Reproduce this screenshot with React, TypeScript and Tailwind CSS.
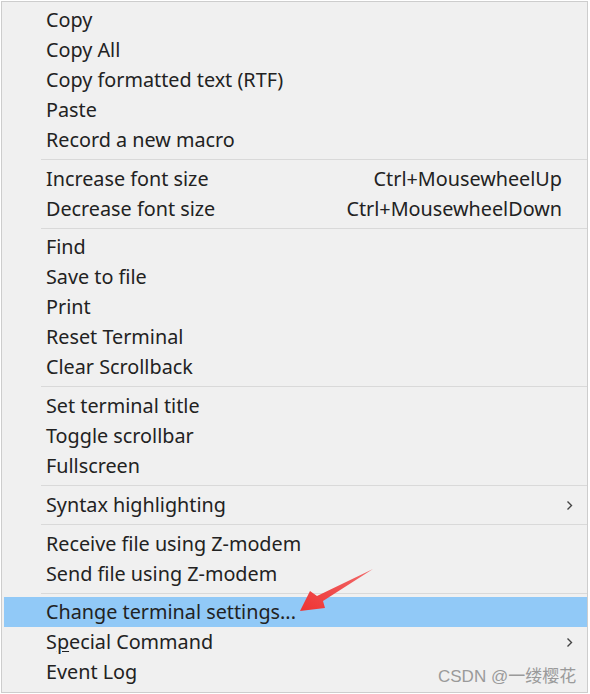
import React from "react";

type Item = {
  label: React.ReactNode;
  shortcut?: string;
  sub?: boolean;
  active?: boolean;
};

const groups: { items: Item[]; gap: string }[] = [
  {
    gap: "h-[9px]",
    items: [
      { label: "Copy" },
      { label: "Copy All" },
      { label: "Copy formatted text (RTF)" },
      { label: "Paste" },
      { label: "Record a new macro" },
    ],
  },
  {
    gap: "h-[8px]",
    items: [
      { label: "Increase font size", shortcut: "Ctrl+MousewheelUp" },
      { label: "Decrease font size", shortcut: "Ctrl+MousewheelDown" },
    ],
  },
  {
    gap: "h-[9px]",
    items: [
      { label: "Find" },
      { label: "Save to file" },
      { label: "Print" },
      { label: "Reset Terminal" },
      { label: "Clear Scrollback" },
    ],
  },
  {
    gap: "h-[9px]",
    items: [
      { label: "Set terminal title" },
      { label: "Toggle scrollbar" },
      { label: "Fullscreen" },
    ],
  },
  {
    gap: "h-[9px]",
    items: [{ label: "Syntax highlighting", sub: true }],
  },
  {
    gap: "h-[8px]",
    items: [
      { label: "Receive file using Z-modem" },
      { label: "Send file using Z-modem" },
    ],
  },
  {
    gap: "",
    items: [
      { label: "Change terminal settings...", active: true },
      {
        label: (
          <>
            S<span className="underline underline-offset-2">p</span>ecial Command
          </>
        ),
        sub: true,
      },
      { label: "Event Log" },
    ],
  },
];

function Chevron() {
  return (
    <svg width="7" height="11" viewBox="0 0 7 11" className="absolute right-[14px]">
      <path d="M1.5 1.5 L5.5 5.5 L1.5 9.5" fill="none" stroke="#444" strokeWidth="1.4" />
    </svg>
  );
}

function Row({ item }: { item: Item }) {
  return (
    <div
      className={
        "relative flex h-[30px] items-center pr-[25px] " +
        (item.active ? "ml-[2px] bg-[#91c9f7] pl-[42px]" : "pl-[44px]")
      }
    >
      <span className="flex-1 whitespace-nowrap">{item.label}</span>
      {item.shortcut && <span className="whitespace-nowrap">{item.shortcut}</span>}
      {item.sub && <Chevron />}
    </div>
  );
}

export default function App() {
  return (
    <div className="relative h-[694px] w-[590px] overflow-hidden bg-white pl-px pt-px">
      <div
        className="h-[692px] w-[587px] border border-[#cdcdcd] bg-[#f0f0f0] pt-[3px] text-[19.8px] leading-[30px] text-[#222]"
        style={{ fontFamily: '"Noto Sans", "Open Sans", sans-serif' }}
      >
        {groups.map((g, i) => (
          <div key={i}>
            {g.items.map((it, j) => (
              <Row key={j} item={it} />
            ))}
            {g.gap && (
              <div className={"flex items-center " + g.gap}>
                <div className="ml-[39px] h-px flex-1 bg-[#d9d9d9]" />
              </div>
            )}
          </div>
        ))}
      </div>

      <svg className="absolute left-[296px] top-[566px]" width="82" height="50" viewBox="296 566 82 50">
        <defs>
          <linearGradient id="arrowRed" x1="1" y1="0" x2="0" y2="1">
            <stop offset="0" stopColor="#f26b6b" />
            <stop offset="1" stopColor="#ee3333" />
          </linearGradient>
        </defs>
        <polygon
          points="300,611 310,591 317,596 373,569 323,601 325,608"
          fill="url(#arrowRed)"
        />
      </svg>

      <div
        className="absolute left-[438px] top-[664px] whitespace-nowrap text-[17px] text-[#9a9a9a]"
        style={{ fontFamily: '"Liberation Sans", "Noto Sans CJK SC", sans-serif' }}
      >
        CSDN @一缕樱花
      </div>
    </div>
  );
}
